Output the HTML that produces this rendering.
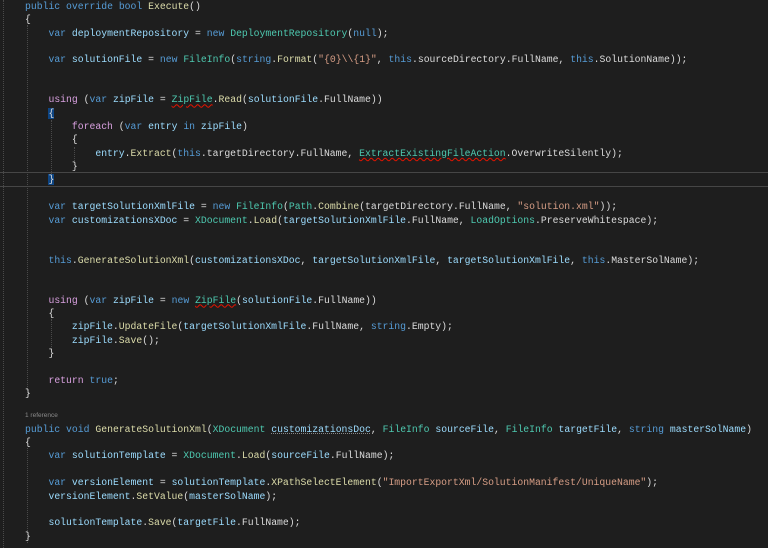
<!DOCTYPE html>
<html><head><meta charset="utf-8"><style>
html,body{margin:0;padding:0;background:#1e1e1e;width:768px;height:548px;overflow:hidden;position:relative}
pre{position:absolute;left:25px;margin:0;font-family:"Liberation Mono",monospace;font-size:9.77px;line-height:13.35px;color:#dcdcdc;white-space:pre}
.k{color:#569cd6}.c{color:#d8a0df}.t{color:#4ec9b0}.m{color:#dcdcaa}.v{color:#9cdcfe}.s{color:#d69d85}
.u{text-decoration:underline wavy #e51400;text-decoration-thickness:0.8px;text-underline-offset:1px}
.b{background:#0e4583}
.cur{position:absolute;left:0;right:0;top:172px;height:13px;border-top:1px solid #464646;border-bottom:1px solid #464646}
.g{position:absolute;width:0;border-left:1px dotted #4a4a4a}
.lens{position:absolute;left:25px;top:412px;font-family:"Liberation Sans",sans-serif;font-size:6.5px;color:#8a8a8a}
</style></head><body>
<div class="cur"></div>
<div class="g" style="left:3px;top:0;height:548px"></div>
<div class="g" style="left:27px;top:25px;height:372px"></div>
<div class="g" style="left:51px;top:120px;height:58px"></div>
<div class="g" style="left:74px;top:147px;height:18px"></div>
<div class="g" style="left:51px;top:319px;height:30px"></div>
<div class="g" style="left:27px;top:448px;height:95px"></div>
<pre style="top:0px"><span class="k">public</span> <span class="k">override</span> <span class="k">bool</span> <span class="m">Execute</span>()
{
    <span class="k">var</span> <span class="v">deploymentRepository</span> = <span class="k">new</span> <span class="t">DeploymentRepository</span>(<span class="k">null</span>);

    <span class="k">var</span> <span class="v">solutionFile</span> = <span class="k">new</span> <span class="t">FileInfo</span>(<span class="k">string</span>.<span class="m">Format</span>(<span class="s">"{0}\\{1}"</span>, <span class="k">this</span>.sourceDirectory.FullName, <span class="k">this</span>.SolutionName));


    <span class="c">using</span> (<span class="k">var</span> <span class="v">zipFile</span> = <span class="u"><span class="t">ZipFile</span></span>.<span class="m">Read</span>(<span class="v">solutionFile</span>.FullName))
    <span class="b">{</span>
        <span class="c">foreach</span> (<span class="k">var</span> <span class="v">entry</span> <span class="k">in</span> <span class="v">zipFile</span>)
        {
            <span class="v">entry</span>.<span class="m">Extract</span>(<span class="k">this</span>.targetDirectory.FullName, <span class="u"><span class="t">ExtractExistingFileAction</span></span>.OverwriteSilently);
        }
    <span class="b">}</span>

    <span class="k">var</span> <span class="v">targetSolutionXmlFile</span> = <span class="k">new</span> <span class="t">FileInfo</span>(<span class="t">Path</span>.<span class="m">Combine</span>(targetDirectory.FullName, <span class="s">"solution.xml"</span>));
    <span class="k">var</span> <span class="v">customizationsXDoc</span> = <span class="t">XDocument</span>.<span class="m">Load</span>(<span class="v">targetSolutionXmlFile</span>.FullName, <span class="t">LoadOptions</span>.PreserveWhitespace);


    <span class="k">this</span>.<span class="m">GenerateSolutionXml</span>(<span class="v">customizationsXDoc</span>, <span class="v">targetSolutionXmlFile</span>, <span class="v">targetSolutionXmlFile</span>, <span class="k">this</span>.MasterSolName);


    <span class="c">using</span> (<span class="k">var</span> <span class="v">zipFile</span> = <span class="k">new</span> <span class="u"><span class="t">ZipFile</span></span>(<span class="v">solutionFile</span>.FullName))
    {
        <span class="v">zipFile</span>.<span class="m">UpdateFile</span>(<span class="v">targetSolutionXmlFile</span>.FullName, <span class="k">string</span>.Empty);
        <span class="v">zipFile</span>.<span class="m">Save</span>();
    }

    <span class="c">return</span> <span class="k">true</span>;
}</pre>
<div class="lens">1 reference</div>
<pre style="top:422.8px"><span class="k">public</span> <span class="k">void</span> <span class="m">GenerateSolutionXml</span>(<span class="t">XDocument</span> <span class="v" style="text-decoration:underline dotted #888">customizationsDoc</span>, <span class="t">FileInfo</span> <span class="v">sourceFile</span>, <span class="t">FileInfo</span> <span class="v">targetFile</span>, <span class="k">string</span> <span class="v">masterSolName</span>)
{
    <span class="k">var</span> <span class="v">solutionTemplate</span> = <span class="t">XDocument</span>.<span class="m">Load</span>(<span class="v">sourceFile</span>.FullName);

    <span class="k">var</span> <span class="v">versionElement</span> = <span class="v">solutionTemplate</span>.<span class="m">XPathSelectElement</span>(<span class="s">"ImportExportXml/SolutionManifest/UniqueName"</span>);
    <span class="v">versionElement</span>.<span class="m">SetValue</span>(<span class="v">masterSolName</span>);

    <span class="v">solutionTemplate</span>.<span class="m">Save</span>(<span class="v">targetFile</span>.FullName);
}</pre>
</body></html>
